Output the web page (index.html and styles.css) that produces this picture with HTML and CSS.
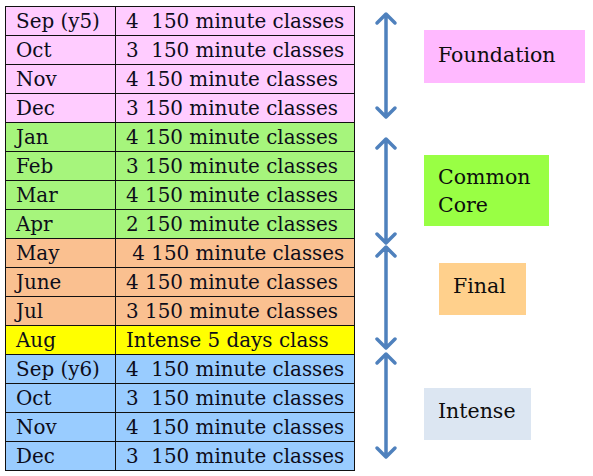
FILE: index.html
```html
<!DOCTYPE html>
<html lang="en">
<head>
    <meta charset="UTF-8">
    <meta name="viewport" content="width=device-width, initial-scale=1.0">
    <title>Class Schedule</title>
    <link rel="stylesheet" href="styles.css">
</head>
<body>
    <div class="page">
        <table class="schedule">
            <tr class="pink"><td>Sep (y5)</td><td>4  150 minute classes</td></tr>
            <tr class="pink"><td>Oct</td><td>3  150 minute classes</td></tr>
            <tr class="pink"><td>Nov</td><td>4 150 minute classes</td></tr>
            <tr class="pink"><td>Dec</td><td>3 150 minute classes</td></tr>
            <tr class="green"><td>Jan</td><td>4 150 minute classes</td></tr>
            <tr class="green"><td>Feb</td><td>3 150 minute classes</td></tr>
            <tr class="green"><td>Mar</td><td>4 150 minute classes</td></tr>
            <tr class="green"><td>Apr</td><td>2 150 minute classes</td></tr>
            <tr class="orange"><td>May</td><td> 4 150 minute classes</td></tr>
            <tr class="orange"><td>June</td><td>4 150 minute classes</td></tr>
            <tr class="orange"><td>Jul</td><td>3 150 minute classes</td></tr>
            <tr class="yellow"><td>Aug</td><td>Intense 5 days class</td></tr>
            <tr class="blue"><td>Sep (y6)</td><td>4  150 minute classes</td></tr>
            <tr class="blue"><td>Oct</td><td>3  150 minute classes</td></tr>
            <tr class="blue"><td>Nov</td><td>4  150 minute classes</td></tr>
            <tr class="blue"><td>Dec</td><td>3  150 minute classes</td></tr>
        </table>

        <div class="phases">
            <div class="phase phase-1">
                <svg class="arrow" width="24" height="124" viewBox="0 0 24 124">
                    <path d="M12 9 V110 M3 17 L12 8 L21 17 M3 102 L12 111 L21 102"/>
                </svg>
                <div class="label foundation">Foundation</div>
            </div>
            <div class="phase phase-2">
                <svg class="arrow" width="24" height="115" viewBox="0 0 24 115">
                    <path d="M12 9 V112 M3 18 L12 9 L21 18 M3 104 L12 113 L21 104"/>
                </svg>
                <div class="label core">Common<br>Core</div>
            </div>
            <div class="phase phase-3">
                <svg class="arrow" width="24" height="105" viewBox="0 0 24 105">
                    <path d="M12 2 V102 M3 11 L12 2 L21 11 M3 94 L12 103 L21 94"/>
                </svg>
                <div class="label final">Final</div>
            </div>
            <div class="phase phase-4">
                <svg class="arrow" width="24" height="119" viewBox="0 0 24 119">
                    <path d="M12 4 V106 M3 13 L12 4 L21 13 M3 98 L12 107 L21 98"/>
                </svg>
                <div class="label intense">Intense</div>
            </div>
        </div>
    </div>
</body>
</html>
```

FILE: styles.css
```css
* {
    margin: 0;
    padding: 0;
    box-sizing: border-box;
}

body {
    font-family: "DejaVu Serif", "Liberation Serif", serif;
    background: white;
    color: #0d0d1a;
}

.page {
    display: flex;
    align-items: flex-start;
    padding: 6px 0 0 5px;
}

.schedule {
    border-collapse: collapse;
    font-size: 19.9px;
}

.schedule td {
    border: 1px solid #111;
    height: 29px;
    padding: 1px 0 0 10px;
    white-space: pre;
    vertical-align: middle;
    line-height: 1;
}

.schedule td:first-child {
    width: 110px;
}

.schedule td:last-child {
    width: 239px;
}

.pink { background: #ffccff; }
.green { background: #a6f57c; }
.orange { background: #fac090; }
.yellow { background: #ffff00; }
.blue { background: #99ccff; }

.phases {
    display: flex;
    flex-direction: column;
    margin-left: 19px;
}

.phase {
    display: flex;
    align-items: flex-start;
}

.phase-1 { height: 124px; }
.phase-2 { height: 115px; }
.phase-3 { height: 105px; }
.phase-4 { height: 119px; }

.arrow {
    flex: none;
}

.arrow path {
    fill: none;
    stroke: #4f81bd;
    stroke-width: 3.5;
    stroke-linecap: round;
    stroke-linejoin: round;
}

.label {
    font-size: 20.5px;
    line-height: 28px;
    color: #0d0d0d;
    margin-left: 26px;
    padding-left: 14px;
}

.foundation {
    background: #ffb9ff;
    width: 161px;
    height: 53px;
    margin-top: 24px;
    padding-top: 11px;
}

.core {
    background: #99ff44;
    width: 125px;
    height: 71px;
    margin-top: 25px;
    padding-top: 8px;
}

.final {
    background: #ffd08c;
    width: 87px;
    height: 52px;
    margin-top: 18px;
    margin-left: 41px;
    padding-top: 9px;
}

.intense {
    background: #dce6f2;
    width: 107px;
    height: 52px;
    margin-top: 38px;
    padding-top: 9px;
}
```
